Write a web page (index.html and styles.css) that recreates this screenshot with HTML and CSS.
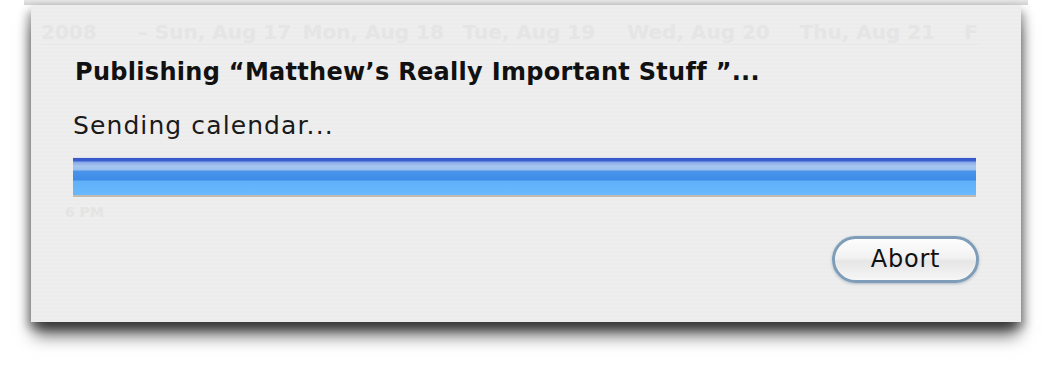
FILE: index.html
```html
<!DOCTYPE html>
<html>
<head>
<meta charset="utf-8">
<link rel="stylesheet" href="styles.css">
</head>
<body>
<div class="stage">
  <div class="topbar"></div>
  <div class="sheet">
    <div class="ghost-row">
      <span class="g1">2008</span>
      <span class="g2">– Sun, Aug 17</span>
      <span class="g3">Mon, Aug 18</span>
      <span class="g4">Tue, Aug 19</span>
      <span class="g5">Wed, Aug 20</span>
      <span class="g6">Thu, Aug 21</span>
      <span class="g7">F</span>
    </div>
    <div class="title">Publishing “Matthew’s Really Important Stuff ”...</div>
    <div class="status">Sending calendar...</div>
    <div class="progress"><div class="fill"></div></div>
    <div class="ghost-time">6 PM</div>
    <div class="actions">
      <button class="btn">Abort</button>
    </div>
  </div>
</div>
</body>
</html>
```
FILE: styles.css
```css
* { box-sizing: border-box; }
html, body { margin: 0; padding: 0; background: #ffffff; }
body { width: 1050px; height: 375px; overflow: hidden; font-family: "DejaVu Sans", "Liberation Sans", sans-serif; }

.stage { width: 1050px; height: 375px; display: flex; flex-direction: column; }

.topbar {
  height: 5px;
  margin-left: 24px;
  width: 1004px;
  background: linear-gradient(#e6e6e6, #d2d2d2);
}

.sheet {
  margin-left: 31px;
  width: 990px;
  height: 317px;
  background: repeating-linear-gradient(#eeeeee 0, #eeeeee 2px, #ececec 2px, #ececec 4px);
  box-shadow: 0 16px 16px -3px rgba(0,0,0,0.62), -4px 6px 9px rgba(0,0,0,0.28), 4px 6px 9px rgba(0,0,0,0.28);
  padding: 14px 43px 0 44px;
  display: flex;
  flex-direction: column;
}

.ghost-row {
  height: 26px;
  display: flex;
  font-size: 20px;
  font-weight: bold;
  color: #e5e5e5;
  line-height: 26px;
  margin-left: -34px;
  white-space: nowrap;
  overflow: hidden;
  border-bottom: 1px solid #e7e7e7;
}
.ghost-row span { display: block; }
.g1 { width: 100px; }
.g2 { width: 170px; }
.g3 { width: 165px; }
.g4 { width: 170px; }
.g5 { width: 178px; }
.g6 { width: 170px; }

.title {
  margin-top: 13px;
  font-size: 24px;
  font-weight: bold;
  letter-spacing: 0.3px;
  line-height: 28px;
  color: #111111;
  white-space: nowrap;
}

.status {
  margin-top: 26px;
  margin-left: -2px;
  font-size: 25px;
  letter-spacing: 1.1px;
  line-height: 28px;
  color: #1a1a1a;
  white-space: nowrap;
}

.progress {
  margin-top: 17px;
  margin-left: -2px;
  width: 903px;
  height: 40px;
  padding: 1px 0 2px 0;
  background: linear-gradient(#dfe2ee, #dfe2ee 1px, transparent 1px, transparent 38px, #c2bbb0 38px);
}
.fill {
  height: 100%;
  background: linear-gradient(
    #3657c8 0, #3a60d2 3px,
    #86a8e6 4px, #a7c5ef 8px, #9cc0f0 12px,
    #4b94e9 13px, #3d8ae8 22px,
    #5fb0f8 23px, #6ab9ff 100%);
}

.ghost-time {
  margin-top: 6px;
  margin-left: -10px;
  height: 18px;
  font-size: 14px;
  line-height: 18px;
  color: #e4e4e4;
  font-weight: bold;
}

.actions {
  margin-top: 15px;
  display: flex;
  justify-content: flex-end;
  margin-right: -1px;
}

.btn {
  width: 147px;
  height: 47px;
  border-radius: 24px;
  border: 3px solid #7f9db9;
  background: linear-gradient(#fdfdfd 0%, #f2f2f2 45%, #e6e6e6 55%, #f6f6f6 100%);
  box-shadow: 0 1px 3px rgba(60,90,120,0.35), inset 0 0 2px rgba(255,255,255,0.9);
  font-family: "DejaVu Sans", "Liberation Sans", sans-serif;
  font-size: 24px;
  letter-spacing: 0.8px;
  color: #111111;
  padding: 0 0 3px 0;
  line-height: 40px;
}
```
